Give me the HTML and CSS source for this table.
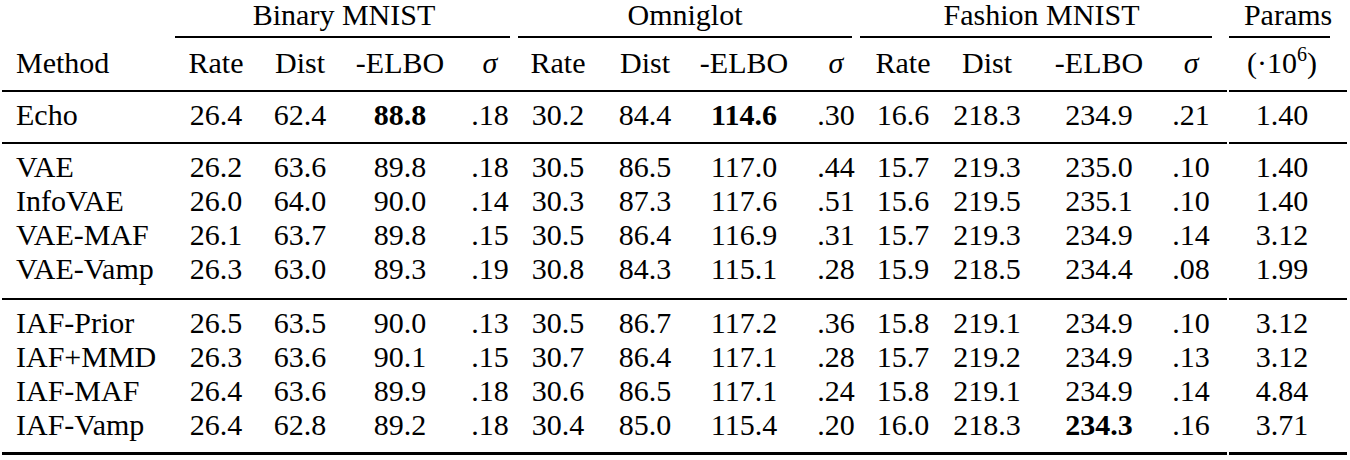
FILE: index.html
```html
<!DOCTYPE html>
<html lang="en">
<head>
    <meta charset="UTF-8">
    <title>Rate / Distortion results</title>
    <link rel="stylesheet" href="styles.css">
</head>
<body>

<div class="tables">
    <table class="results">
        <colgroup>
            <col class="w-method">
            <col class="w-88"><col class="w-84"><col class="w-116"><col class="w-56">
            <col class="w-88"><col class="w-86"><col class="w-112"><col class="w-56">
            <col class="w-90"><col class="w-82"><col class="w-142"><col class="w-57">
        </colgroup>
        <thead>
            <tr class="groups">
                <th></th>
                <th colspan="4" class="group binary">Binary MNIST</th>
                <th colspan="4" class="group omniglot">Omniglot</th>
                <th colspan="4" class="group fashion">Fashion MNIST</th>
            </tr>
            <tr class="cols">
                <th class="method">Method</th>
                <th>Rate</th><th>Dist</th><th>-ELBO</th><th><i>σ</i></th>
                <th>Rate</th><th>Dist</th><th>-ELBO</th><th><i>σ</i></th>
                <th>Rate</th><th>Dist</th><th>-ELBO</th><th><i>σ</i></th>
            </tr>
        </thead>
        <tbody>
            <tr>
                <td class="method">Echo</td>
                <td>26.4</td><td>62.4</td><td><b>88.8</b></td><td>.18</td>
                <td>30.2</td><td>84.4</td><td><b>114.6</b></td><td>.30</td>
                <td>16.6</td><td>218.3</td><td>234.9</td><td>.21</td>
            </tr>
        </tbody>
        <tbody class="vae">
            <tr>
                <td class="method">VAE</td>
                <td>26.2</td><td>63.6</td><td>89.8</td><td>.18</td>
                <td>30.5</td><td>86.5</td><td>117.0</td><td>.44</td>
                <td>15.7</td><td>219.3</td><td>235.0</td><td>.10</td>
            </tr>
            <tr>
                <td class="method">InfoVAE</td>
                <td>26.0</td><td>64.0</td><td>90.0</td><td>.14</td>
                <td>30.3</td><td>87.3</td><td>117.6</td><td>.51</td>
                <td>15.6</td><td>219.5</td><td>235.1</td><td>.10</td>
            </tr>
            <tr>
                <td class="method">VAE-MAF</td>
                <td>26.1</td><td>63.7</td><td>89.8</td><td>.15</td>
                <td>30.5</td><td>86.4</td><td>116.9</td><td>.31</td>
                <td>15.7</td><td>219.3</td><td>234.9</td><td>.14</td>
            </tr>
            <tr>
                <td class="method">VAE-Vamp</td>
                <td>26.3</td><td>63.0</td><td>89.3</td><td>.19</td>
                <td>30.8</td><td>84.3</td><td>115.1</td><td>.28</td>
                <td>15.9</td><td>218.5</td><td>234.4</td><td>.08</td>
            </tr>
        </tbody>
        <tbody class="last">
            <tr>
                <td class="method">IAF-Prior</td>
                <td>26.5</td><td>63.5</td><td>90.0</td><td>.13</td>
                <td>30.5</td><td>86.7</td><td>117.2</td><td>.36</td>
                <td>15.8</td><td>219.1</td><td>234.9</td><td>.10</td>
            </tr>
            <tr>
                <td class="method">IAF+MMD</td>
                <td>26.3</td><td>63.6</td><td>90.1</td><td>.15</td>
                <td>30.7</td><td>86.4</td><td>117.1</td><td>.28</td>
                <td>15.7</td><td>219.2</td><td>234.9</td><td>.13</td>
            </tr>
            <tr>
                <td class="method">IAF-MAF</td>
                <td>26.4</td><td>63.6</td><td>89.9</td><td>.18</td>
                <td>30.6</td><td>86.5</td><td>117.1</td><td>.24</td>
                <td>15.8</td><td>219.1</td><td>234.9</td><td>.14</td>
            </tr>
            <tr>
                <td class="method">IAF-Vamp</td>
                <td>26.4</td><td>62.8</td><td>89.2</td><td>.18</td>
                <td>30.4</td><td>85.0</td><td>115.4</td><td>.20</td>
                <td>16.0</td><td>218.3</td><td><b>234.3</b></td><td>.16</td>
            </tr>
        </tbody>
    </table>

    <!-- parameter counts sit in their own little table -->
    <table class="params">
        <thead>
            <tr class="groups">
                <th class="group">Params</th>
            </tr>
            <tr class="cols">
                <th>(·10<sup>6</sup>)</th>
            </tr>
        </thead>
        <tbody>
            <tr><td>1.40</td></tr>
        </tbody>
        <tbody class="vae">
            <tr><td>1.40</td></tr>
            <tr><td>1.40</td></tr>
            <tr><td>3.12</td></tr>
            <tr><td>1.99</td></tr>
        </tbody>
        <tbody class="last">
            <tr><td>3.12</td></tr>
            <tr><td>3.12</td></tr>
            <tr><td>4.84</td></tr>
            <tr><td>3.71</td></tr>
        </tbody>
    </table>
</div>

</body>
</html>
```

FILE: styles.css
```css
/* General styling */
body {
    margin: 0;
    background: #fff;
    color: #000;
    font-family: "Liberation Serif", "Times New Roman", serif;
    font-size: 30px;
}

.tables {
    display: flex;
    gap: 2px;
    padding-left: 2px;
}

table {
    border-collapse: separate;
    border-spacing: 0;
    table-layout: fixed;
}

.results {
    width: 1225px;
}

.params {
    width: 118px;
}

th, td {
    box-sizing: border-box;
    padding: 0;
    font-weight: normal;
    text-align: center;
    line-height: 34px;
    white-space: nowrap;
}

b {
    font-weight: bold;
}

sup {
    font-size: 20px;
    line-height: 0;
    vertical-align: 12px;
}

/* Column widths */
.w-method { width: 168px; }
.w-56 { width: 56px; }
.w-57 { width: 57px; }
.w-82 { width: 82px; }
.w-84 { width: 84px; }
.w-86 { width: 86px; }
.w-88 { width: 88px; }
.w-90 { width: 90px; }
.w-112 { width: 112px; }
.w-116 { width: 116px; }
.w-142 { width: 142px; }

.method {
    text-align: left;
    padding-left: 14px;
}

/* nudge a few columns so they sit like the LaTeX original */
.results tr > :nth-child(2),
.results tr > :nth-child(10) { padding-left: 4px; }
.results tbody tr > :nth-child(5),
.results .cols > :nth-child(5) { padding-left: 8px; }
.results tbody tr > :nth-child(9),
.results .cols > :nth-child(9) { padding-left: 16px; }
.results tbody tr > :nth-child(13),
.results .cols > :nth-child(13) { padding-right: 15px; }
.params td, .params .cols th { padding-right: 12px; }

/* Header rows and rules */
.groups th {
    line-height: 30px;
    padding-bottom: 8px;
}

.group {
    background-image: linear-gradient(#000, #000);
    background-repeat: no-repeat;
    background-size: calc(100% - 8px) 2px;
    background-position: 4px 100%;
}
.group.binary {
    background-size: calc(100% - 9px) 2px;
    background-position: 5px 100%;
}
.group.fashion {
    background-size: calc(100% - 19px) 2px;
}
.params .group {
    background-size: calc(100% - 17px) 2px;
    background-position: 0 100%;
}

.cols th {
    padding-top: 8px;
    padding-bottom: 10px;
    border-bottom: 2px solid #000;
}

tbody tr:first-child td {
    padding-top: 6px;
}
tbody tr:last-child td {
    padding-bottom: 10px;
    border-bottom: 2px solid #000;
}
.vae tr:last-child td {
    padding-bottom: 12px;
}
.last tr:last-child td {
    border-bottom-width: 3px;
}
```
